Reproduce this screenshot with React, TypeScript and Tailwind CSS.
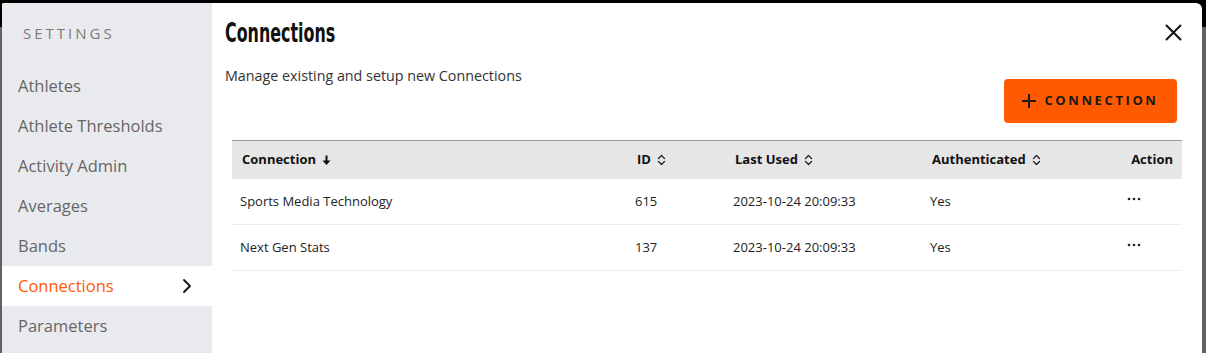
import React from "react";

const font = { fontFamily: "'Open Sans', 'Noto Sans', sans-serif" };

function SortBoth() {
  return (
    <svg width="9" height="12" viewBox="0 0 9 12" className="ml-[6px]" fill="none" stroke="#222" strokeWidth="1.3" strokeLinecap="round" strokeLinejoin="round">
      <path d="M1.5 4.5 L4.5 1.5 L7.5 4.5" />
      <path d="M1.5 7.5 L4.5 10.5 L7.5 7.5" />
    </svg>
  );
}

function SortDown() {
  return (
    <svg width="9" height="11" viewBox="0 0 9 11" className="ml-[6px]" fill="#111">
      <rect x="3.5" y="0.5" width="2" height="6" />
      <path d="M0.5 5.5 L8.5 5.5 L4.5 10 Z" />
    </svg>
  );
}

const items = [
  "Athletes",
  "Athlete Thresholds",
  "Activity Admin",
  "Averages",
  "Bands",
  "Connections",
  "Parameters",
];

const rows = [
  { name: "Sports Media Technology", id: "615", used: "2023-10-24 20:09:33", auth: "Yes" },
  { name: "Next Gen Stats", id: "137", used: "2023-10-24 20:09:33", auth: "Yes" },
];

export default function App() {
  return (
    <div
      className="w-[1206px] h-[353px] overflow-hidden pt-[3px] pl-[2px] pr-[4px] bg-[linear-gradient(to_bottom,#000_27px,#626262_27px)]"
      style={font}
    >
      <div className="flex h-[360px] w-[1200px] rounded-tr-[6px] rounded-tl-[2px] overflow-hidden bg-white">
        {/* Sidebar */}
        <div className="w-[210px] shrink-0 bg-[#e9eaee] flex flex-col">
          <div className="pl-[21px] pt-[19px] h-[63px] text-[15px] leading-[22px] tracking-[0.2em] text-[#7a7a7a]">
            SETTINGS
          </div>
          {items.map((it) => {
            const active = it === "Connections";
            return (
              <div
                key={it}
                className={
                  "h-[40px] flex items-center justify-between pl-[16px] pr-[20px] text-[16.5px] " +
                  (active ? "bg-white text-[#ff5a00]" : "text-[#666]")
                }
              >
                <span>{it}</span>
                {active && (
                  <svg width="10" height="16" viewBox="0 0 10 16" fill="none" stroke="#111" strokeWidth="1.8" strokeLinecap="round" strokeLinejoin="round">
                    <path d="M2 2 L8 8 L2 14" />
                  </svg>
                )}
              </div>
            );
          })}
        </div>

        {/* Main */}
        <div className="flex-1 relative pl-[13px] pr-[18px]">
          <div className="flex items-start justify-between pt-[15px]">
            <h1
              className="text-[26px] font-bold text-[#111] leading-[30px] inline-block origin-left scale-x-[0.68]"
              style={{ fontFamily: "'DejaVu Sans Condensed', 'DejaVu Sans', sans-serif" }}
            >
              Connections
            </h1>
            <button className="mt-[6px] mr-[2px]">
              <svg width="17" height="17" viewBox="0 0 17 17" fill="none" stroke="#111" strokeWidth="2" strokeLinecap="round">
                <path d="M1.5 1.5 L15.5 15.5 M15.5 1.5 L1.5 15.5" />
              </svg>
            </button>
          </div>
          <div className="flex items-start justify-between">
            <p className="mt-[18px] text-[14.3px] leading-[20px] text-[#333]">Manage existing and setup new Connections</p>
            <button className="mt-[31px] mr-[7px] w-[173px] h-[44px] rounded-[4px] bg-[#ff5a00] flex items-center justify-center gap-[8px] text-[13px] font-bold tracking-[0.2em] text-[#1a1a1a]">
              <svg width="14" height="14" viewBox="0 0 14 14" stroke="#1a1a1a" strokeWidth="2">
                <path d="M7 0 V14 M0 7 H14" />
              </svg>
              CONNECTION
            </button>
          </div>

          {/* Table */}
          <div className="mt-[17px] ml-[7px] mr-[2px] border-t-[1.5px] border-[#9a9a9a]">
            <div className="grid grid-cols-[395px_99px_197px_197px_1fr] h-[38px] items-center bg-[#e6e6e6] text-[13px] font-bold text-[#111]">
              <div className="pl-[10px] flex items-center">Connection<SortDown /></div>
              <div className="pl-[10px] flex items-center">ID<SortBoth /></div>
              <div className="pl-[9px] flex items-center">Last Used<SortBoth /></div>
              <div className="pl-[9px] flex items-center">Authenticated<SortBoth /></div>
              <div className="text-right pr-[9px]">Action</div>
            </div>
            {rows.map((r) => (
              <div
                key={r.name}
                className="grid grid-cols-[395px_99px_197px_197px_1fr] h-[46px] items-center border-b border-[#ececec] text-[13px] text-[#222]"
              >
                <div className="pl-[8px]">{r.name}</div>
                <div className="pl-[8px]">{r.id}</div>
                <div className="pl-[7px]">{r.used}</div>
                <div className="pl-[7px]">{r.auth}</div>
                <div className="pl-[7px] flex items-center pb-[6px]">
                  <svg width="14" height="4" viewBox="0 0 14 4" fill="#222">
                    <circle cx="2" cy="2" r="1.3" />
                    <circle cx="7" cy="2" r="1.3" />
                    <circle cx="12" cy="2" r="1.3" />
                  </svg>
                </div>
              </div>
            ))}
          </div>
        </div>
      </div>
    </div>
  );
}
